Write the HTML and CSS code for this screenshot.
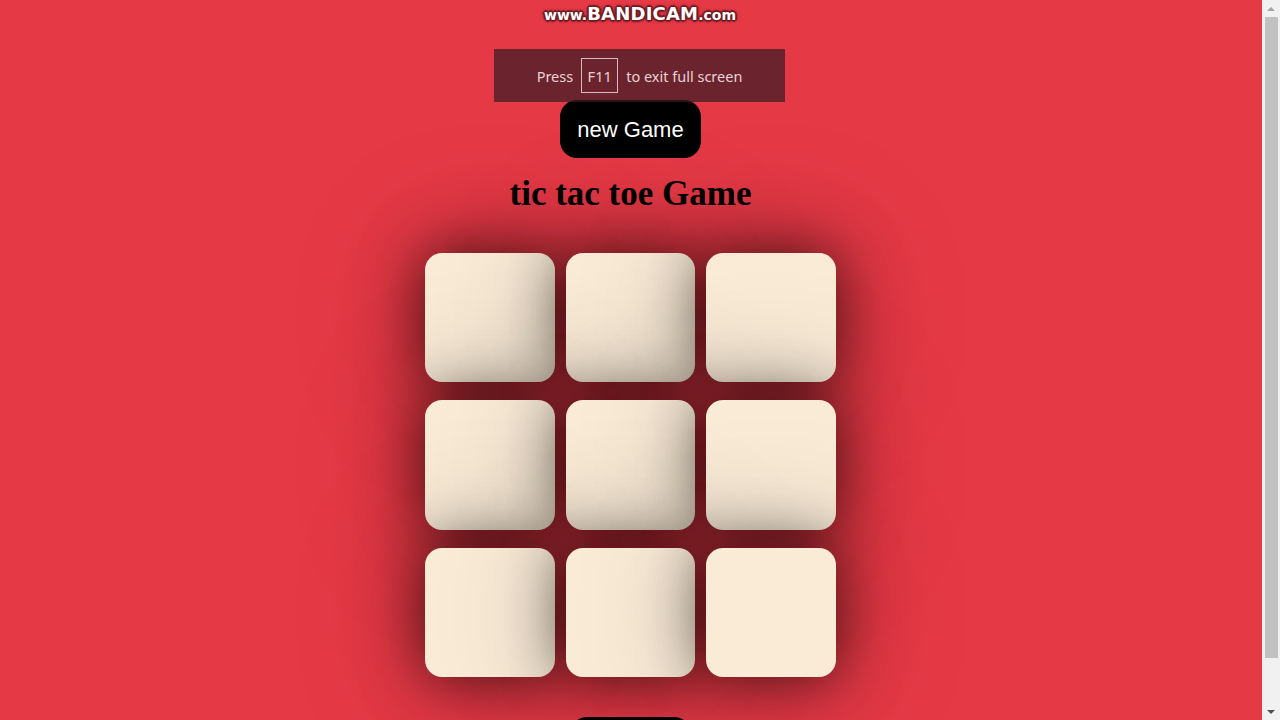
FILE: index.html
```html
<!DOCTYPE html>
<html lang="en">
<head>
<meta charset="utf-8">
<title>tic tac toe Game</title>
<link rel="stylesheet" href="styles.css">
</head>
<body>
<div class="screen">
  <div class="page">
    <main class="main">
      <button class="new-btn">new Game</button>
      <h1 class="title">tic tac toe Game</h1>
      <div class="container">
        <div class="game">
          <button class="box"></button>
          <button class="box"></button>
          <button class="box"></button>
          <button class="box"></button>
          <button class="box"></button>
          <button class="box"></button>
          <button class="box"></button>
          <button class="box"></button>
          <button class="box"></button>
        </div>
      </div>
      <button class="reset-btn">Reset Game</button>
    </main>
    <div class="watermark"><span class="wm-small">www.</span><span class="wm-big">BANDICAM</span><span class="wm-small">.com</span></div>
    <div class="fs-notice">
      <span>Press</span>
      <span class="key">F11</span>
      <span>to exit full screen</span>
    </div>
  </div>
  <div class="scrollbar">
    <div class="sb-arrow"><span class="tri-up"></span></div>
    <div class="sb-track"><div class="sb-thumb"></div></div>
    <div class="sb-arrow"><span class="tri-down"></span></div>
  </div>
</div>
</body>
</html>
```
FILE: styles.css
```css
* { box-sizing: border-box; }

html, body {
  margin: 0;
  padding: 0;
  height: 100%;
  overflow: hidden;
}

.screen {
  display: flex;
  height: 100vh;
  width: 100vw;
}

.page {
  flex: 1;
  position: relative;
  overflow: hidden;
  background-color: #e63946;
}

.main {
  display: flex;
  flex-direction: column;
  align-items: center;
  padding-top: 100px;
  padding-right: 1px;
}

.new-btn,
.reset-btn {
  font-family: "Liberation Sans", Arial, sans-serif;
  font-size: 22px;
  line-height: 25px;
  padding: 16.5px 17.6px;
  background-color: #000;
  color: #fff;
  border: none;
  border-radius: 17px;
}

.reset-btn {
  padding: 16.5px 0;
  width: 121px;
}

.title {
  margin: 16px 0 0;
  font-family: "Liberation Serif", "Times New Roman", serif;
  font-weight: bold;
  font-size: 35px;
  line-height: 39px;
  color: #000;
  text-align: center;
}

.container {
  height: 70vh;
  display: flex;
  justify-content: center;
  align-items: center;
}

.game {
  height: 60vmin;
  width: 60vmin;
  display: flex;
  flex-wrap: wrap;
  gap: 1.5vmin;
  justify-content: center;
  align-items: center;
}

.box {
  height: 18vmin;
  width: 18vmin;
  border-radius: 17px;
  border: none;
  background-color: #faebd7;
  box-shadow: 0 0 60px rgba(0, 0, 0, 0.65), 0 0 130px rgba(0, 0, 0, 0.3);
}

/* recorder watermark */
.watermark {
  position: absolute;
  top: 3px;
  left: 0;
  width: 1280px;
  text-align: center;
  font-family: "DejaVu Sans", sans-serif;
  font-weight: bold;
  color: #fff;
  white-space: nowrap;
  text-shadow:
    1px 1px 0 #6e1a22, -1px -1px 0 #6e1a22, 1px -1px 0 #6e1a22, -1px 1px 0 #6e1a22,
    2px 0 1px #7a1e26, -2px 0 1px #7a1e26, 0 2px 1px #7a1e26, 0 -2px 1px #7a1e26,
    0 0 4px #5a1018;
}

.wm-small { font-size: 14px; }
.wm-big { font-size: 18px; letter-spacing: 0.2px; }

/* browser full screen notice */
.fs-notice {
  position: absolute;
  left: 494px;
  top: 49px;
  width: 291px;
  height: 53px;
  background-color: rgba(60, 28, 36, 0.72);
  display: flex;
  align-items: center;
  justify-content: center;
  gap: 8px;
  font-family: "Noto Sans", "Open Sans", sans-serif;
  font-size: 14.5px;
  color: #e9d3d6;
}

.key {
  display: flex;
  align-items: center;
  justify-content: center;
  width: 37px;
  height: 35px;
  border: 1px solid #d9b9bd;
}

/* scrollbar */
.scrollbar {
  width: 18px;
  background-color: #f1f1f1;
  display: flex;
  flex-direction: column;
}

.sb-arrow {
  height: 17px;
  display: flex;
  align-items: center;
  justify-content: center;
}

.tri-up {
  width: 0;
  height: 0;
  border-left: 4px solid transparent;
  border-right: 4px solid transparent;
  border-bottom: 4px solid #a3a3a3;
}

.tri-down {
  width: 0;
  height: 0;
  border-left: 4px solid transparent;
  border-right: 4px solid transparent;
  border-top: 4px solid #505050;
}

.sb-track {
  flex: 1;
  padding: 0 2px 0 3px;
}

.sb-thumb {
  height: 641px;
  background-color: #c1c1c1;
}
```
